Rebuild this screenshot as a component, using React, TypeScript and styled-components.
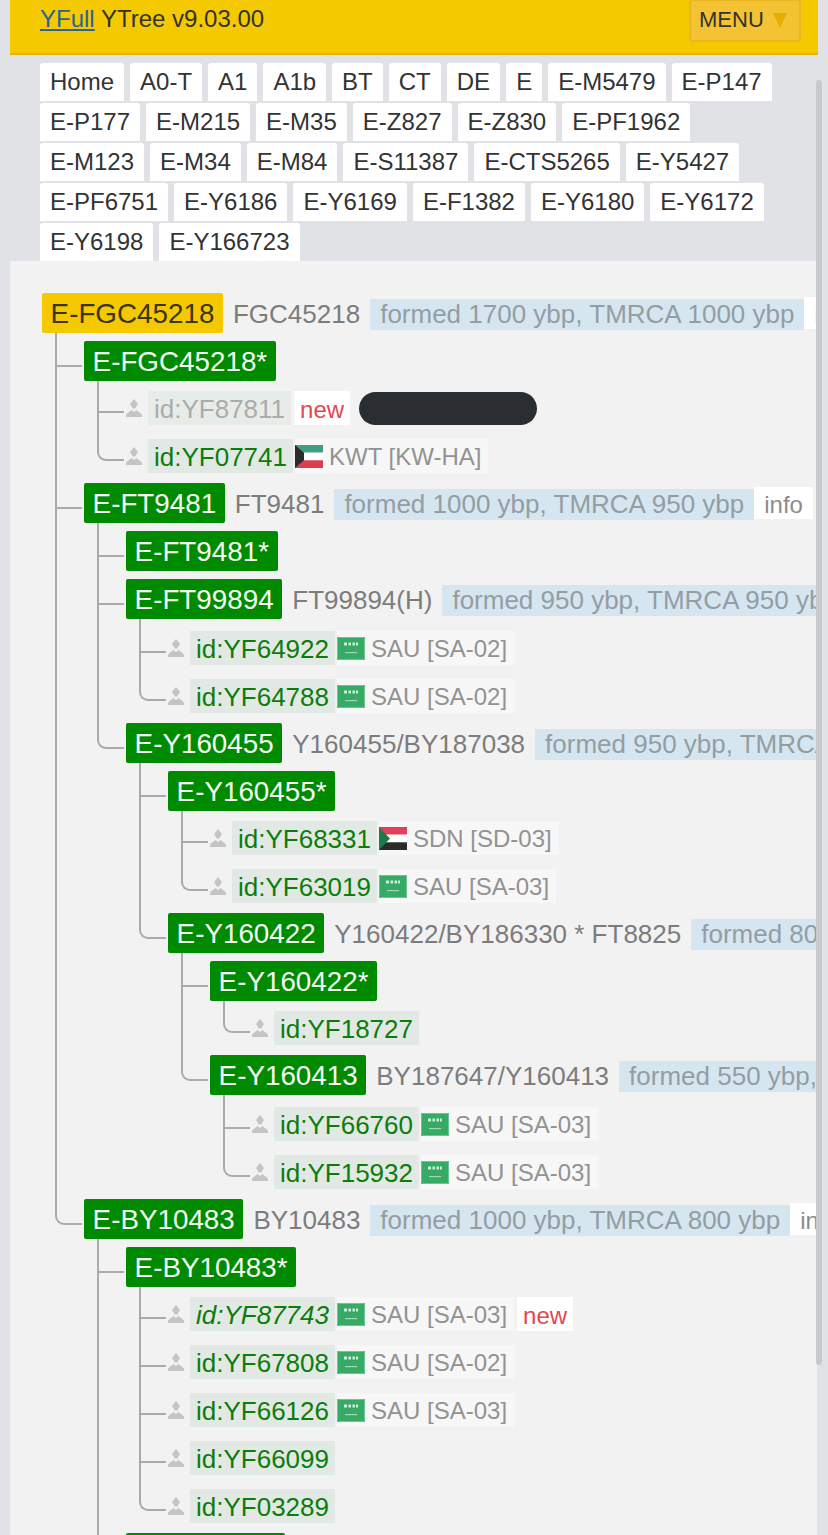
import styled, { createGlobalStyle } from 'styled-components';

const TABS = [
  'Home', 'A0-T', 'A1', 'A1b', 'BT', 'CT', 'DE', 'E', 'E-M5479', 'E-P147',
  'E-P177', 'E-M215', 'E-M35', 'E-Z827', 'E-Z830', 'E-PF1962',
  'E-M123', 'E-M34', 'E-M84', 'E-S11387', 'E-CTS5265', 'E-Y5427',
  'E-PF6751', 'E-Y6186', 'E-Y6169', 'E-F1382', 'E-Y6180', 'E-Y6172',
  'E-Y6198', 'E-Y166723',
];

type FlagCode = 'KWT' | 'SAU' | 'SDN';

type Sample = {
  id: string;
  flag?: FlagCode;
  region?: string;
  isNew?: boolean;
  dim?: boolean;
  italic?: boolean;
  hidden?: boolean;
};

type Clade = {
  name: string;
  snps?: string;
  age?: string;
  info?: boolean;
  samples?: Sample[];
  children?: Clade[];
  open?: boolean;
};

const sau = (id: string, region: string): Sample => ({ id, flag: 'SAU', region: `SAU [${region}]` });

const ROOT: Clade = {
  name: 'E-FGC45218',
  snps: 'FGC45218',
  age: 'formed 1700 ybp, TMRCA 1000 ybp',
  info: true,
  children: [
    {
      name: 'E-FGC45218*',
      samples: [
        { id: 'YF87811', dim: true, isNew: true, hidden: true },
        { id: 'YF07741', flag: 'KWT', region: 'KWT [KW-HA]' },
      ],
    },
    {
      name: 'E-FT9481',
      snps: 'FT9481',
      age: 'formed 1000 ybp, TMRCA 950 ybp',
      info: true,
      children: [
        { name: 'E-FT9481*' },
        {
          name: 'E-FT99894',
          snps: 'FT99894(H)',
          age: 'formed 950 ybp, TMRCA 950 ybp',
          info: true,
          samples: [sau('YF64922', 'SA-02'), sau('YF64788', 'SA-02')],
        },
        {
          name: 'E-Y160455',
          snps: 'Y160455/BY187038',
          age: 'formed 950 ybp, TMRCA 800 ybp',
          info: true,
          children: [
            {
              name: 'E-Y160455*',
              samples: [
                { id: 'YF68331', flag: 'SDN', region: 'SDN [SD-03]' },
                sau('YF63019', 'SA-03'),
              ],
            },
            {
              name: 'E-Y160422',
              snps: 'Y160422/BY186330 * FT8825',
              age: 'formed 800 ybp, TMRCA 550 ybp',
              info: true,
              children: [
                { name: 'E-Y160422*', samples: [{ id: 'YF18727' }] },
                {
                  name: 'E-Y160413',
                  snps: 'BY187647/Y160413',
                  age: 'formed 550 ybp, TMRCA 350 ybp',
                  info: true,
                  samples: [sau('YF66760', 'SA-03'), sau('YF15932', 'SA-03')],
                },
              ],
            },
          ],
        },
      ],
    },
    {
      name: 'E-BY10483',
      snps: 'BY10483',
      age: 'formed 1000 ybp, TMRCA 800 ybp',
      info: true,
      open: true,
      children: [
        {
          name: 'E-BY10483*',
          samples: [
            { ...sau('YF87743', 'SA-03'), italic: true, isNew: true },
            sau('YF67808', 'SA-02'),
            sau('YF66126', 'SA-03'),
            { id: 'YF66099' },
            { id: 'YF03289' },
          ],
        },
        { name: 'E-BY10484' },
      ],
    },
  ],
};

const GlobalStyle = createGlobalStyle`
  html, body {
    margin: 0;
    height: 1535px;
    overflow: hidden;
    background: #e0e2e5;
  }
  * {
    box-sizing: border-box;
  }
`;

const Page = styled.div`
  position: relative;
  width: 828px;
  height: 1535px;
  padding: 0 10px;
  overflow: hidden;
  font-family: 'Liberation Sans', Arial, sans-serif;
  font-size: 24px;
  color: #333;
`;

const Header = styled.header`
  display: flex;
  justify-content: space-between;
  align-items: flex-start;
  height: 55px;
  padding: 0 17px 0 30px;
  background: #f5c900;
  border-bottom: 2px solid #e8b30c;
  line-height: 38px;
`;

const Brand = styled.a`
  color: #2a6496;
  text-decoration: underline;
`;

const MenuButton = styled.div`
  display: flex;
  align-items: center;
  gap: 9px;
  width: 112px;
  height: 43px;
  margin-top: -1px;
  padding: 0 8px 2px;
  background: #f3c333;
  border: 2px solid #e8b722;
  border-radius: 4px;
  font-size: 22px;
`;

const MenuArrow = styled.span`
  width: 0;
  height: 0;
  margin-top: 2px;
  border-left: 7px solid transparent;
  border-right: 7px solid transparent;
  border-top: 15px solid #e5ae00;
`;

const TabBar = styled.nav`
  display: flex;
  flex-wrap: wrap;
  gap: 2px 6px;
  padding: 8px 38px 0 30px;
`;

const Tab = styled.div`
  height: 38px;
  padding: 0 10px;
  background: #fff;
  border-radius: 3px 3px 0 0;
  line-height: 37px;
`;

const Panel = styled.main`
  height: 1300px;
  margin-right: 1px;
  padding: 32px 0 0 32px;
  background: #f2f2f2;
  overflow: hidden;
`;

const Tree = styled.ul`
  margin: 0;
  padding: 0 0 0 42px;
  list-style: none;
`;

const RootTree = styled(Tree)`
  padding-left: 0;
`;

const Branch = styled.li<{ $last?: boolean; $elbow: number }>`
  position: relative;
  display: flow-root;
  white-space: nowrap;

  &::before {
    content: '';
    position: absolute;
    left: -29px;
    top: -8px;
    width: 25px;
    height: ${(p) => p.$elbow + 8}px;
    border-left: 2px solid #aaa;
    border-bottom: 2px solid #aaa;
    border-bottom-left-radius: ${(p) => (p.$last ? '9px' : '0')};
  }

  &::after {
    content: '';
    display: ${(p) => (p.$last ? 'none' : 'block')};
    position: absolute;
    left: -29px;
    top: 0;
    bottom: 0;
    border-left: 2px solid #aaa;
  }
`;

const RootItem = styled.li`
  display: flow-root;
  white-space: nowrap;
`;

const NodeRow = styled.div`
  display: flex;
  align-items: center;
  height: 40px;
  margin-bottom: 8px;
`;

const Badge = styled.span<{ $root?: boolean }>`
  flex-shrink: 0;
  height: 40px;
  padding: 0 8.6px;
  background: ${(p) => (p.$root ? '#f5c900' : '#008a00')};
  color: ${(p) => (p.$root ? '#3b3517' : '#f4fbf4')};
  border-radius: 2px;
  font-size: 27.8px;
  line-height: 41px;
`;

const Snps = styled.span`
  flex-shrink: 0;
  margin: 2px 10px 0;
  font-size: 26px;
  color: #7c7c7c;
`;

const Age = styled.span`
  flex-shrink: 0;
  height: 31px;
  margin-top: 2px;
  padding: 0 10px;
  background: #d6e6f1;
  color: #949da3;
  font-size: 26px;
  line-height: 31px;
`;

const Info = styled.span`
  flex-shrink: 0;
  height: 32px;
  padding: 0 10px;
  background: #fff;
  color: #8c8c8c;
  line-height: 35px;
`;

const SampleRow = styled.div<{ $lead: number; $last: boolean }>`
  display: flex;
  align-items: center;
  gap: 3px;
  padding: ${(p) => p.$lead}px 0 ${(p) => (p.$last ? 10 : 14)}px;
`;

const PersonIcon = styled.svg`
  flex-shrink: 0;
  width: 16px;
  height: 18px;
  margin-right: 3px;
  fill: #c4c4c4;
`;

const SampleId = styled.span<{ $dim?: boolean; $italic?: boolean }>`
  flex-shrink: 0;
  height: 34px;
  padding: 0 6px;
  background: ${(p) => (p.$dim ? '#e8ece9' : '#e2e9e4')};
  color: ${(p) => (p.$dim ? '#a9aca9' : '#0b7d0b')};
  font-size: 26px;
  font-style: ${(p) => (p.$italic ? 'italic' : 'normal')};
  line-height: 36px;
`;

const Origin = styled.span`
  flex-shrink: 0;
  display: flex;
  align-items: center;
  gap: 6px;
  height: 34px;
  margin-left: -1px;
  padding-right: 7px;
  background: #f7f7f7;
  color: #929292;
`;

const RegionText = styled.span`
  margin-top: 2px;
`;

const NewMark = styled.span`
  flex-shrink: 0;
  height: 34px;
  padding: 0 6px;
  background: #fff;
  color: #e2474f;
  line-height: 37px;
`;

const Hidden = styled.span`
  flex-shrink: 0;
  width: 178px;
  height: 33px;
  margin-left: 6px;
  background: #2a2e33;
  border-radius: 17px;
`;

const FlagBox = styled.svg`
  flex-shrink: 0;
  width: 28px;
  height: 23px;
`;

const ScrollThumb = styled.div`
  position: absolute;
  right: 6px;
  top: 80px;
  width: 6px;
  height: 1285px;
  background: #c8c9cb;
  border-radius: 3px;
`;

const Person = () => (
  <PersonIcon viewBox="0 0 16 18">
    <path d="M8 0 L12 5 L9.2 9.5 H6.8 L4 5 Z" />
    <path d="M0 18 V16 C1 13.6 4 13 5.5 11 L8 13 L10.5 11 C12 13 15 13.6 16 16 V18 Z" />
  </PersonIcon>
);

const Flag = ({ code }: { code: FlagCode }) => {
  if (code === 'KWT') {
    return (
      <FlagBox viewBox="0 0 28 23">
        <rect width="28" height="7.7" fill="#3f9d82" />
        <rect y="7.7" width="28" height="7.6" fill="#fff" />
        <rect y="15.3" width="28" height="7.7" fill="#dc3d50" />
        <path d="M0 0 L9 7.7 V15.3 L0 23 Z" fill="#2b2b2b" />
      </FlagBox>
    );
  }
  if (code === 'SDN') {
    return (
      <FlagBox viewBox="0 0 28 23">
        <rect width="28" height="7.7" fill="#e0405a" />
        <rect y="7.7" width="28" height="7.6" fill="#fff" />
        <rect y="15.3" width="28" height="7.7" fill="#2b2b2b" />
        <path d="M0 0 L11 11.5 L0 23 Z" fill="#1f7a4a" />
      </FlagBox>
    );
  }
  return (
    <FlagBox viewBox="0 0 28 23">
      <rect width="28" height="23" rx="1" fill="#35ab66" />
      <rect x="0.5" y="0.5" width="27" height="22" rx="1" fill="none" stroke="#6cc592" />
      <path d="M7 7 H10 M11.5 7 H14 M15.5 7 H18 M19 7 H21" stroke="#cfeedd" strokeWidth="3" />
      <rect x="8" y="15" width="12" height="1.2" fill="#9fd8b6" />
    </FlagBox>
  );
};

const SampleLine = ({ sample, lead, last }: { sample: Sample; lead: number; last: boolean }) => (
  <SampleRow $lead={lead} $last={last}>
    <Person />
    <SampleId $dim={sample.dim} $italic={sample.italic}>
      id:{sample.id}
    </SampleId>
    {sample.flag && (
      <Origin>
        <Flag code={sample.flag} />
        <RegionText>{sample.region}</RegionText>
      </Origin>
    )}
    {sample.isNew && <NewMark>new</NewMark>}
    {sample.hidden && <Hidden />}
  </SampleRow>
);

const NodeLine = ({ clade, root }: { clade: Clade; root?: boolean }) => (
  <NodeRow>
    <Badge $root={root}>{clade.name}</Badge>
    {clade.snps && <Snps>{clade.snps}</Snps>}
    {clade.age && <Age>{clade.age}</Age>}
    {clade.info && <Info>info</Info>}
  </NodeRow>
);

const Children = ({ clade }: { clade: Clade }) => {
  const children = clade.children ?? [];
  const samples = clade.samples ?? [];
  // clades with an age tag push their samples 2px further down
  const lead = clade.age ? 4 : 2;

  return (
    <Tree>
      {samples.map((sample, i) => {
        const first = i === 0;
        return (
          <Branch
            key={sample.id}
            $last={i === samples.length - 1}
            $elbow={first ? lead + 20 : 20}
          >
            <SampleLine sample={sample} lead={first ? lead : 0} last={i === samples.length - 1} />
          </Branch>
        );
      })}
      {children.map((child, i) => (
        <Branch key={child.name} $last={i === children.length - 1 && !clade.open} $elbow={24}>
          <NodeLine clade={child} />
          {(child.children || child.samples) && <Children clade={child} />}
        </Branch>
      ))}
    </Tree>
  );
};

const App = () => {
  return (
    <Page>
      <GlobalStyle />
      <Header>
        <div>
          <Brand>YFull</Brand> YTree v9.03.00
        </div>
        <MenuButton>
          MENU
          <MenuArrow />
        </MenuButton>
      </Header>
      <TabBar>
        {TABS.map((tab) => (
          <Tab key={tab}>{tab}</Tab>
        ))}
      </TabBar>
      <Panel>
        <RootTree>
          <RootItem>
            <NodeLine clade={ROOT} root />
            <Children clade={ROOT} />
          </RootItem>
        </RootTree>
      </Panel>
      <ScrollThumb />
    </Page>
  );
};

export default App;
